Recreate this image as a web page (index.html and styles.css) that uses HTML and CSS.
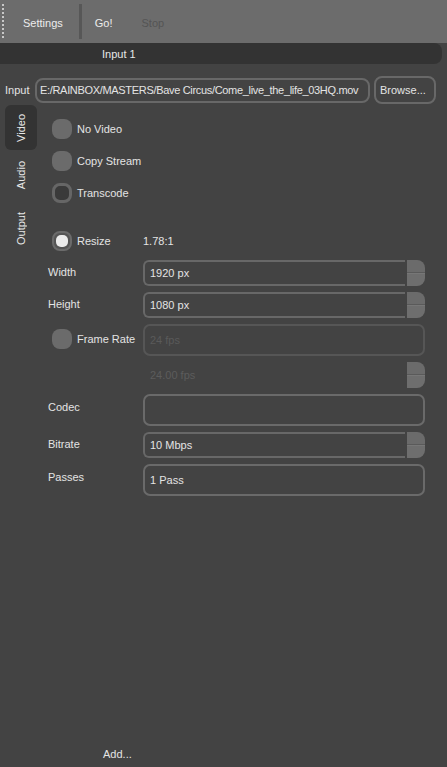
FILE: index.html
```html
<!DOCTYPE html>
<html>
<head>
<meta charset="utf-8">
<link rel="stylesheet" href="styles.css">
</head>
<body>
<div class="app">
  <div class="toolbar">
    <span class="grip"></span>
    <span class="tb-btn tb-settings">Settings</span>
    <span class="tb-sep"></span>
    <span class="tb-btn tb-go">Go!</span>
    <span class="tb-btn tb-stop">Stop</span>
  </div>
  <div class="tabbar"><span class="tab">Input 1</span></div>
  <div class="input-row">
    <span class="input-label">Input</span>
    <div class="path">E:/RAINBOX/MASTERS/Bave Circus/Come_live_the_life_03HQ.mov</div>
    <div class="browse">Browse...</div>
  </div>
  <div class="main">
    <div class="vtabs">
      <div class="vtab active"><span>Video</span></div>
      <div class="vtab vtab-audio"><span>Audio</span></div>
      <div class="vtab vtab-output"><span>Output</span></div>
    </div>
    <div class="panel">
      <div class="radio-row"><span class="radio"></span><span class="rlabel">No Video</span></div>
      <div class="radio-row"><span class="radio"></span><span class="rlabel">Copy Stream</span></div>
      <div class="radio-row"><span class="radio ring"></span><span class="rlabel">Transcode</span></div>
      <div class="radio-row resize-row">
        <span class="check-cell"><span class="radio checked"><span class="dot"></span></span><span class="rlabel">Resize</span></span>
        <span class="ratio">1.78:1</span>
      </div>
      <div class="form">
        <div class="frow h26">
          <span class="flabel">Width</span>
          <div class="spin"><div class="field">1920 px</div><div class="btns"><span class="up"></span><span class="down"></span></div></div>
        </div>
        <div class="frow h26">
          <span class="flabel">Height</span>
          <div class="spin"><div class="field">1080 px</div><div class="btns"><span class="up"></span><span class="down"></span></div></div>
        </div>
        <div class="frow h32">
          <span class="check-cell"><span class="radio"></span><span class="rlabel">Frame Rate</span></span>
          <div class="combo disabled">24 fps</div>
        </div>
        <div class="frow h26">
          <span class="flabel"></span>
          <div class="spin bare"><div class="field">24.00 fps</div><div class="btns"><span class="up"></span><span class="down"></span></div></div>
        </div>
        <div class="frow h32">
          <span class="flabel">Codec</span>
          <div class="combo"></div>
        </div>
        <div class="frow h26">
          <span class="flabel">Bitrate</span>
          <div class="spin"><div class="field">10 Mbps</div><div class="btns"><span class="up"></span><span class="down"></span></div></div>
        </div>
        <div class="frow h32">
          <span class="flabel">Passes</span>
          <div class="combo">1 Pass</div>
        </div>
      </div>
    </div>
  </div>
  <div class="footer"><span class="add">Add...</span></div>
</div>
</body>
</html>
```
FILE: styles.css
```css
html, body {
  margin: 0;
  padding: 0;
  background: #434343;
}
body {
  font-family: "Liberation Sans", Arial, sans-serif;
  font-size: 11px;
  color: #e4e4e4;
}
.app {
  width: 447px;
  height: 767px;
  display: flex;
  flex-direction: column;
  overflow: hidden;
}
.toolbar {
  height: 43px;
  background: #6c6c6c;
  display: flex;
  align-items: center;
  flex-shrink: 0;
}
.grip {
  width: 2px;
  height: 34px;
  margin-left: 2px;
  margin-top: -1px;
  background: repeating-linear-gradient(to bottom, #c8c8c8 0 2px, transparent 2px 4px);
}
.tb-btn {
  color: #ececec;
  margin-top: 3px;
}
.tb-settings { margin-left: 19px; }
.tb-sep {
  width: 3px;
  height: 35px;
  background: #575757;
  margin-left: 16px;
}
.tb-go { margin-left: 13px; }
.tb-stop { margin-left: 29px; color: #545454; }

.tabbar {
  height: 21px;
  background: #333333;
  margin-right: 5px;
  border-radius: 0 8px 8px 0;
  display: flex;
  align-items: center;
  flex-shrink: 0;
}
.tab {
  padding-left: 102px;
  color: #e8e8e8;
}

.input-row {
  display: flex;
  align-items: center;
  height: 28px;
  margin-top: 12px;
  flex-shrink: 0;
}
.input-label {
  margin-left: 5px;
  width: 30px;
}
.path {
  width: 328px;
  height: 21px;
  border: 2px solid #686868;
  border-radius: 8px;
  padding-left: 3px;
  box-sizing: content-box;
  display: flex;
  align-items: center;
  white-space: nowrap;
  overflow: hidden;
  letter-spacing: -0.32px;
}
.browse {
  margin-left: 4px;
  width: 54px;
  height: 24px;
  border: 2px solid #686868;
  border-radius: 8px;
  display: flex;
  align-items: center;
  padding-left: 4px;
  box-sizing: content-box;
  white-space: nowrap;
}

.main {
  flex: 1;
  display: flex;
  align-items: flex-start;
}
.vtabs {
  margin-left: 5px;
  margin-top: 1px;
  width: 32px;
  display: flex;
  flex-direction: column;
}
.vtab {
  display: flex;
  justify-content: center;
  align-items: center;
  height: 45px;
  border-radius: 6px;
}
.vtab span {
  writing-mode: vertical-rl;
  transform: rotate(180deg);
  color: #e8e8e8;
}
.vtab.active { background: #333333; }
.vtab-audio { height: 50px; }
.vtab-output { height: 54px; margin-top: 2px; }

.panel {
  margin-left: 11px;
  padding-top: 15px;
  display: flex;
  flex-direction: column;
}
.radio-row {
  display: flex;
  align-items: center;
  height: 20px;
  margin-bottom: 12px;
  margin-left: 4px;
}
.radio {
  width: 20px;
  height: 20px;
  border-radius: 8px;
  background: #6b6b6b;
  box-sizing: border-box;
  display: flex;
  align-items: center;
  justify-content: center;
  flex-shrink: 0;
}
.radio.ring {
  background: #3a3a3a;
  border: 3px solid #666666;
}
.radio.checked {
  background: #555555;
  border: 2px solid #6b6b6b;
}
.dot {
  width: 12px;
  height: 12px;
  border-radius: 5px;
  background: #ececec;
}
.rlabel {
  margin-left: 5px;
}
.check-cell {
  display: flex;
  align-items: center;
  width: 91px;
}
.resize-row {
  margin-top: 16px;
  margin-bottom: 9px;
}

.form {
  display: flex;
  flex-direction: column;
  gap: 6px;
}
.frow {
  display: grid;
  grid-template-columns: 95px 282px;
  align-items: center;
}
.frow .check-cell {
  margin-left: 4px;
  width: auto;
  padding-bottom: 3px;
}
.h26 { height: 26px; }
.h32 { height: 32px; }
.flabel {
  padding-bottom: 7px;
}
.h26 .flabel { padding-bottom: 3px; }

.spin {
  display: flex;
  height: 26px;
}
.spin .field {
  width: 260px;
  border: 2px solid #686868;
  border-right: none;
  border-radius: 6px 0 0 6px;
  display: flex;
  align-items: center;
  padding-left: 5px;
  box-sizing: content-box;
  height: 22px;
}
.spin.bare .field {
  border-color: transparent;
  color: #5c5c5c;
}
.btns {
  margin-left: 2px;
  width: 18px;
  display: flex;
  flex-direction: column;
}
.btns .up {
  height: 13px;
  background: #6b6b6b;
  border-radius: 0 8px 0 0;
  border-bottom: 1px solid #5a5a5a;
  box-sizing: border-box;
}
.btns .down {
  height: 13px;
  background: #6e6e6e;
  border-radius: 0 0 8px 0;
  border-top: 1px solid #777777;
  box-sizing: border-box;
}
.combo {
  height: 28px;
  border: 2px solid #6a6a6a;
  border-radius: 7px;
  display: flex;
  align-items: center;
  padding-left: 5px;
  width: 273px;
  box-sizing: content-box;
}
.combo.disabled {
  border-color: #565656;
  color: #5a5a5a;
}

.footer {
  height: 26px;
  flex-shrink: 0;
  display: flex;
  align-items: center;
}
.add {
  margin-left: 103px;
  color: #e4e4e4;
}
```
